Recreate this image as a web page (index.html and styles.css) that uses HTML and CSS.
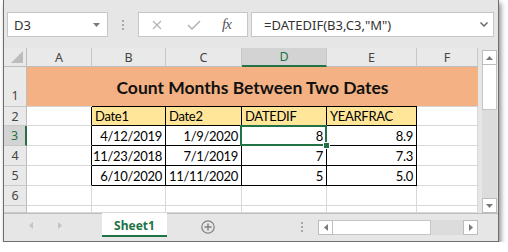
FILE: index.html
```html
<!DOCTYPE html>
<html lang="en">
<head>
  <meta charset="utf-8" />
  <title>Count Months Between Two Dates</title>
  <link rel="stylesheet" href="styles.css">
</head>
<body>

  <div class="window">

    <div class="formula-bar">
      <div class="name-box">
        <span>D3</span>
        <svg class="caret" width="7" height="4" viewBox="0 0 7 4"><path d="M0 0h7L3.5 4z" fill="#7a7a7a"/></svg>
      </div>
      <div class="grip"><i></i><i></i><i></i></div>
      <div class="fx-box">
        <svg class="ico-x" width="10" height="10" viewBox="0 0 10 10"><path d="M1 1l8 8M9 1l-8 8" stroke="#b5b5b5" stroke-width="1.3"/></svg>
        <svg class="ico-ok" width="14" height="10" viewBox="0 0 14 10"><path d="M1 5l4 4 8-8" stroke="#b5b5b5" stroke-width="1.6" fill="none"/></svg>
        <span class="fx">fx</span>
      </div>
      <div class="formula-input">
        <span>=DATEDIF(B3,C3,"M")</span>
        <svg class="chev" width="8" height="5" viewBox="0 0 8 5"><path d="M0.5 0.5l3.5 3.5 3.5-3.5" stroke="#6a6a6a" stroke-width="1.5" fill="none"/></svg>
      </div>
    </div>

    <div class="sheet">
      <div class="grid">
        <!-- column headers -->
        <div class="corner"><svg width="12" height="12" viewBox="0 0 12 12"><path d="M12 0v12H0z" fill="#bcbcbc"/></svg></div>
        <div class="ch">A</div>
        <div class="ch">B</div>
        <div class="ch">C</div>
        <div class="ch active">D</div>
        <div class="ch">E</div>
        <div class="ch">F</div>

        <!-- row 1 -->
        <div class="rh tall">1</div>
        <div class="title">Count Months Between Two Dates</div>

        <!-- row 2 -->
        <div class="rh">2</div>
        <div class="c edge"></div>
        <div class="c t h">Date1</div>
        <div class="c t h">Date2</div>
        <div class="c t h">DATEDIF</div>
        <div class="c t h">YEARFRAC</div>
        <div class="c"></div>

        <!-- row 3 -->
        <div class="rh active">3</div>
        <div class="c edge"></div>
        <div class="c t n">4/12/2019</div>
        <div class="c t n">1/9/2020</div>
        <div class="c t n selected">8</div>
        <div class="c t n">8.9</div>
        <div class="c"></div>

        <!-- row 4 -->
        <div class="rh">4</div>
        <div class="c edge"></div>
        <div class="c t n">11/23/2018</div>
        <div class="c t n">7/1/2019</div>
        <div class="c t n">7</div>
        <div class="c t n">7.3</div>
        <div class="c"></div>

        <!-- row 5 -->
        <div class="rh">5</div>
        <div class="c edge"></div>
        <div class="c t n">6/10/2020</div>
        <div class="c t n">11/11/2020</div>
        <div class="c t n">5</div>
        <div class="c t n">5.0</div>
        <div class="c"></div>

        <!-- row 6 -->
        <div class="rh">6</div>
        <div class="c"></div>
        <div class="c"></div>
        <div class="c"></div>
        <div class="c"></div>
        <div class="c"></div>
        <div class="c"></div>

        <!-- row 7 (cut off) -->
        <div class="rh"></div>
        <div class="c"></div>
        <div class="c"></div>
        <div class="c"></div>
        <div class="c"></div>
        <div class="c"></div>
        <div class="c"></div>
      </div>

      <div class="vscroll">
        <div class="sb-btn"><svg width="7" height="4" viewBox="0 0 7 4"><path d="M0 4h7L3.5 0z" fill="#7a7a7a"/></svg></div>
        <div class="sb-thumb"></div>
        <div class="sb-track"></div>
        <div class="sb-btn"><svg width="7" height="4" viewBox="0 0 7 4"><path d="M0 0h7L3.5 4z" fill="#7a7a7a"/></svg></div>
      </div>
    </div>

    <div class="tab-bar">
      <svg class="nav-left" width="4" height="7" viewBox="0 0 4 7"><path d="M4 0v7L0 3.5z" fill="#c4c4c4"/></svg>
      <svg class="nav-right" width="4" height="7" viewBox="0 0 4 7"><path d="M0 0v7l4-3.5z" fill="#c4c4c4"/></svg>
      <div class="tab">Sheet1</div>
      <svg class="add-sheet" width="14" height="14" viewBox="0 0 14 14"><circle cx="7" cy="7" r="6.2" fill="none" stroke="#808080" stroke-width="1.2"/><path d="M7 3.5v7M3.5 7h7" stroke="#808080" stroke-width="1.4"/></svg>
      <div class="grip tab-grip"><i></i><i></i><i></i></div>
      <div class="hscroll">
        <div class="hs-btn"><svg width="4" height="7" viewBox="0 0 4 7"><path d="M4 0v7L0 3.5z" fill="#7a7a7a"/></svg></div>
        <div class="hs-thumb"></div>
        <div class="hs-track"></div>
        <div class="hs-btn"><svg width="4" height="7" viewBox="0 0 4 7"><path d="M0 0v7l4-3.5z" fill="#7a7a7a"/></svg></div>
      </div>
    </div>

  </div>

</body>
</html>
```

FILE: styles.css
```css
body {
  margin: 0;
  background: #fff;
  font-family: "Noto Sans", sans-serif;
  color: #222;
}

.window {
  margin-left: 3px;
  width: 494px;
  border: 1px solid #6e6e6e;
  border-top: 0;
  background: #e6e6e6;
  box-shadow: 2px 3px 5px rgba(0, 0, 0, 0.45);
}

/* formula bar */
.formula-bar {
  height: 48px;
  box-sizing: border-box;
  padding-top: 12px;
  display: flex;
  align-items: flex-start;
}

.name-box,
.fx-box,
.formula-input {
  height: 25px;
  box-sizing: border-box;
  background: #fff;
  border: 1px solid #c6c6c6;
  display: flex;
  align-items: center;
}

.name-box {
  margin-left: 3px;
  width: 101px;
  padding-left: 6px;
  font-size: 13px;
  color: #333;
}

.name-box .caret {
  margin-left: auto;
  margin-right: 7px;
}

.grip {
  display: flex;
  flex-direction: column;
  gap: 2px;
  margin-left: 14px;
  margin-top: 8px;
}

.grip i {
  display: block;
  width: 2px;
  height: 2px;
  background: #a9a9a9;
}

.fx-box {
  margin-left: 14px;
  width: 110px;
}

.ico-x {
  margin-left: 13px;
}

.ico-ok {
  margin-left: 25px;
}

.fx {
  margin-left: 21px;
  font-family: "Liberation Serif", serif;
  font-style: italic;
  font-size: 15px;
  color: #555;
  letter-spacing: -1px;
}

.formula-input {
  margin-left: 3px;
  width: 243px;
  padding-left: 12px;
  font-size: 13px;
  color: #333;
}

.formula-input .chev {
  margin-left: auto;
  margin-right: 5px;
}

/* sheet */
.sheet {
  display: flex;
  height: 165px;
}

.grid {
  display: grid;
  grid-template-columns: 23px 65px 74px 76px 85px 90px 61px;
  grid-template-rows: 19px 40px 19px 20px 20px 20px 20px 7px;
  background: #fff;
  overflow: hidden;
}

.grid > div {
  box-sizing: border-box;
  display: flex;
}

.corner {
  background: #e9e9e9;
  border-right: 1px solid #bdbdbd;
  border-bottom: 1px solid #bdbdbd;
  align-items: flex-end;
  justify-content: flex-end;
  padding: 0 3px 3px 0;
}

.ch {
  background: #e9e9e9;
  border-right: 1px solid #c8c8c8;
  border-bottom: 1px solid #bdbdbd;
  justify-content: center;
  align-items: center;
  font-size: 12.5px;
  color: #444;
}

.rh {
  background: #e9e9e9;
  border-right: 1px solid #bdbdbd;
  border-bottom: 1px solid #c8c8c8;
  justify-content: center;
  align-items: center;
  font-size: 12.5px;
  color: #444;
}

.rh.tall {
  align-items: flex-end;
  padding-bottom: 2px;
}

.ch.active {
  background: #d3d3d3;
  color: #217346;
  border-bottom: 2px solid #217346;
}

.rh.active {
  background: #d3d3d3;
  color: #217346;
  border-right: 2px solid #217346;
}

.title {
  grid-column: 2 / 8;
  background: #f4b183;
  border-bottom: 1px solid #d4d4d4;
  justify-content: center;
  align-items: center;
  font-family: "Lato", sans-serif;
  font-weight: bold;
  font-size: 17.5px;
  color: #111;
  padding-top: 1px;
}

.c {
  border-right: 1px solid #d9d9d9;
  border-bottom: 1px solid #d9d9d9;
  font-family: "Lato", sans-serif;
  font-size: 13px;
  letter-spacing: -0.3px;
  color: #000;
  align-items: flex-end;
  padding: 0 3px 1px;
}

.c.edge {
  border-right-color: #000;
}

.c.t {
  border-right-color: #000;
  border-bottom-color: #000;
}

.c.h {
  background: #ffe699;
  box-shadow: 0 -1px 0 #000;
}

.c.n {
  justify-content: flex-end;
}

.c.selected {
  position: relative;
  z-index: 1;
}

.c.selected::after {
  content: "";
  position: absolute;
  top: -1px;
  left: -2px;
  right: -1px;
  bottom: -1px;
  border: 2px solid #217346;
}

.c.selected::before {
  content: "";
  position: absolute;
  right: -4px;
  bottom: -4px;
  width: 5px;
  height: 5px;
  background: #217346;
  border: 1px solid #fff;
  z-index: 2;
}

/* vertical scrollbar */
.vscroll {
  margin-left: 4px;
  width: 15px;
  padding-top: 2px;
  display: flex;
  flex-direction: column;
}

.sb-btn {
  height: 15px;
  box-sizing: border-box;
  background: #fff;
  border: 1px solid #bdbdbd;
  display: flex;
  align-items: center;
  justify-content: center;
}

.sb-thumb {
  height: 45px;
  box-sizing: border-box;
  background: #fff;
  border: 1px solid #c6c6c6;
  border-top: 0;
}

.sb-track {
  flex: 1;
  background: #dcdcdc;
}

/* sheet tabs */
.tab-bar {
  height: 27px;
  border-top: 1px solid #bcbcbc;
  display: flex;
  align-items: flex-start;
}

.nav-left {
  margin: 8px 0 0 25px;
}

.nav-right {
  margin: 8px 0 0 25px;
}

.tab {
  margin: -1px 0 0 40px;
  width: 65px;
  height: 24px;
  box-sizing: border-box;
  background: #fff;
  border-bottom: 2px solid #217346;
  display: flex;
  justify-content: center;
  align-items: center;
  padding-top: 2px;
  font-size: 12px;
  font-weight: bold;
  color: #217346;
}

.add-sheet {
  margin: 6px 0 0 34px;
}

.tab-grip {
  margin: 8px 0 0 86px;
}

.hscroll {
  margin: 6px 0 0 15px;
  width: 160px;
  height: 15px;
  display: flex;
}

.hs-btn {
  width: 15px;
  box-sizing: border-box;
  background: #fff;
  border: 1px solid #bdbdbd;
  display: flex;
  align-items: center;
  justify-content: center;
}

.hs-thumb {
  width: 98px;
  box-sizing: border-box;
  background: #fff;
  border: 1px solid #c6c6c6;
  border-left: 0;
}

.hs-track {
  flex: 1;
  background: #dcdcdc;
}
```
